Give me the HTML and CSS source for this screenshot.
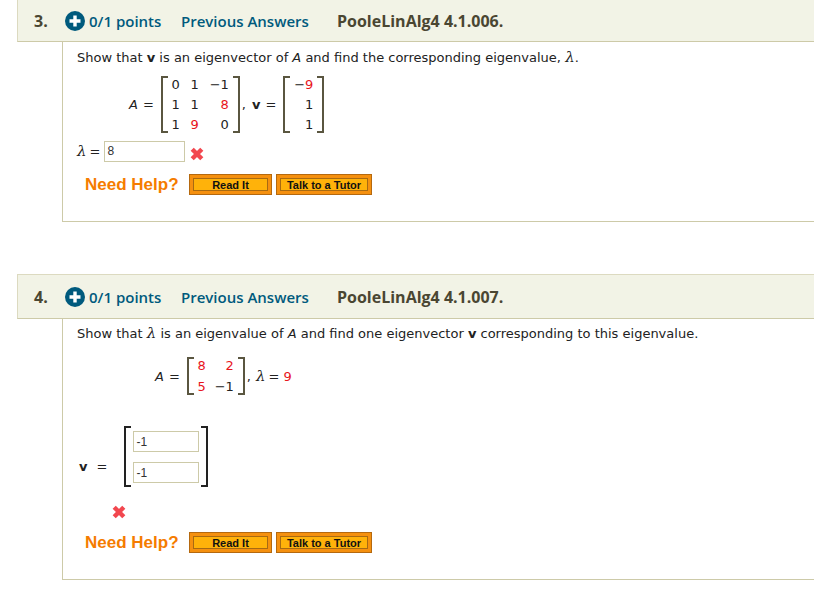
FILE: index.html
```html
<!DOCTYPE html>
<html lang="en">
  <head>
    <meta charset="UTF-8" />
    <title>Questions</title>
    <link rel="stylesheet" href="styles.css">
  </head>
  <body>
    <div class="question q3">
      <div class="q-head">
        <span class="q-num">3.</span>
        <svg class="plus" width="20" height="20" viewBox="0 0 20 20"><circle cx="10" cy="10" r="10" fill="#005a7d"/><path d="M10 4.5v11M4.5 10h11" stroke="#fff" stroke-width="3.4"/></svg>
        <span class="q-points">0/1 points</span>
        <span class="q-prev">Previous Answers</span>
        <span class="q-code">PooleLinAlg4 4.1.006.</span>
      </div>
      <div class="q-body">
        <p class="prompt">Show that <b>v</b> is an eigenvector of <i>A</i> and find the corresponding eigenvalue, <i class="lam">λ</i>.</p>
        <div class="eq eq-a">
          <i>A</i><span class="eq-sign">=</span>
          <div class="matrix m33">
            <span>0</span><span>1</span><span>−1</span>
            <span>1</span><span>1</span><span class="red">8</span>
            <span>1</span><span class="red">9</span><span>0</span>
          </div>
          <span class="comma">,</span><b>v</b><span class="eq-sign">=</span>
          <div class="matrix m31">
            <span>−<span class="red">9</span></span>
            <span>1</span>
            <span>1</span>
          </div>
        </div>
        <div class="answer">
          <i class="lam">λ</i><span class="eq-sign">=</span>
          <input class="box box-wide" type="text" value="8" />
          <svg class="cross" width="14" height="14" viewBox="0 0 14 14"><path d="M2.2 2.2l9.6 9.6M11.8 2.2l-9.6 9.6" stroke="#f2474f" stroke-width="4.4"/></svg>
        </div>
        <div class="help">
          <span class="help-label">Need Help?</span>
          <button class="help-btn read">Read It</button>
          <button class="help-btn tutor">Talk to a Tutor</button>
        </div>
      </div>
    </div>

    <div class="question q4">
      <div class="q-head">
        <span class="q-num">4.</span>
        <svg class="plus" width="20" height="20" viewBox="0 0 20 20"><circle cx="10" cy="10" r="10" fill="#005a7d"/><path d="M10 4.5v11M4.5 10h11" stroke="#fff" stroke-width="3.4"/></svg>
        <span class="q-points">0/1 points</span>
        <span class="q-prev">Previous Answers</span>
        <span class="q-code">PooleLinAlg4 4.1.007.</span>
      </div>
      <div class="q-body">
        <p class="prompt">Show that <i class="lam">λ</i> is an eigenvalue of <i>A</i> and find one eigenvector <b>v</b> corresponding to this eigenvalue.</p>
        <div class="eq eq-b">
          <i>A</i><span class="eq-sign">=</span>
          <div class="matrix m22">
            <span class="red">8</span><span class="red">2</span>
            <span class="red">5</span><span>−1</span>
          </div>
          <span class="comma">,</span><i class="lam">λ</i><span class="eq-sign">=</span><span class="red">9</span>
        </div>
        <div class="vec-answer">
          <div class="vec-label"><b>v</b><span class="eq-sign">=</span></div>
          <div class="matrix input-matrix">
            <input class="box" type="text" value="-1" />
            <input class="box" type="text" value="-1" />
          </div>
        </div>
        <svg class="cross cross-b" width="14" height="14" viewBox="0 0 14 14"><path d="M2.2 2.2l9.6 9.6M11.8 2.2l-9.6 9.6" stroke="#f2474f" stroke-width="4.4"/></svg>
        <div class="help">
          <span class="help-label">Need Help?</span>
          <button class="help-btn read">Read It</button>
          <button class="help-btn tutor">Talk to a Tutor</button>
        </div>
      </div>
    </div>
  </body>
</html>
```

FILE: styles.css
```css
* {
  margin: 0;
  padding: 0;
  box-sizing: border-box;
}

body {
  background: white;
  padding-left: 17px;
  font-family: "DejaVu Sans", sans-serif;
  font-size: 13px;
  color: #222;
  overflow: hidden;
}

.q-head {
  display: flex;
  align-items: center;
  height: 42px;
  padding-left: 16px;
  background: #f2f3e6;
  border-bottom: 1px solid #cdcaa8;
  border-left: 1px solid #dcdac0;
  font-family: "Open Sans", sans-serif;
  font-size: 15px;
  font-weight: 600;
}

.q4 {
  margin-top: 52px;
}

.q4 .q-head {
  height: 45px;
  border-top: 1px solid #dcdac0;
}

.q-num {
  width: 31px;
  font-size: 16px;
  font-weight: 700;
  color: #4a4632;
}

.q-points {
  margin-left: 4px;
  width: 92px;
  color: #005a7d;
}

.q-prev {
  width: 156px;
  color: #005a7d;
}

.q-code {
  font-size: 16px;
  font-weight: 700;
  color: #4a4632;
}

.q-body {
  margin-left: 45px;
  padding-left: 14px;
  border-left: 1px solid #cdcaa8;
  border-bottom: 1px solid #cdcaa8;
}

.q3 .q-body {
  height: 180px;
  padding-top: 7px;
}

.q4 .q-body {
  height: 261px;
  padding-top: 6px;
}

.prompt {
  line-height: 17px;
}

.lam {
  font-family: "DejaVu Serif", serif;
  font-size: 15px;
  line-height: 17px;
}

.eq {
  display: flex;
  align-items: center;
}

.eq-a {
  margin-top: 10px;
  padding-left: 52px;
}

.eq-b {
  margin-top: 15px;
  padding-left: 78px;
}

.eq-sign {
  margin: 0 7px 0 5px;
}

.lam + .eq-sign {
  margin: 0 4px 0 3px;
}

.comma {
  margin: 0 6px 0 2px;
}

.eq-b .comma {
  margin-right: 5px;
}

.red {
  color: #e8141c;
}

.matrix {
  display: grid;
  position: relative;
  border-left: 2px solid #5a5640;
  border-right: 2px solid #5a5640;
  text-align: right;
}

.matrix::before,
.matrix::after {
  content: "";
  position: absolute;
  top: 0;
  bottom: 0;
  width: 5px;
  border-top: 2px solid #5a5640;
  border-bottom: 2px solid #5a5640;
}

.matrix::before {
  left: 0;
}

.matrix::after {
  right: 0;
}

.m33 {
  grid-template-columns: 10px 19px 30px;
  grid-auto-rows: 20px;
  height: 57px;
  padding: 0 9px 0 7px;
  align-items: center;
  align-content: center;
}

.m31 {
  grid-template-columns: 21px;
  grid-auto-rows: 20px;
  height: 57px;
  padding: 0 9px 0 7px;
  align-items: center;
  align-content: center;
}

.m22 {
  grid-template-columns: 10px 28px;
  grid-auto-rows: 21px;
  height: 38px;
  padding: 0 9px 0 7px;
  align-items: center;
  align-content: center;
}

.answer {
  display: flex;
  align-items: center;
  margin-top: 7px;
  height: 22px;
}

.box {
  display: block;
  width: 66px;
  height: 21px;
  padding-left: 2px;
  border: 1px solid #cdcaa8;
  background: white;
  font-family: "Liberation Sans", sans-serif;
  font-size: 12px;
  color: #333;
}

.box-wide {
  width: 81px;
}

.cross {
  display: block;
  margin-left: 5px;
}

.answer .cross {
  margin-top: 5px;
}

.help {
  display: flex;
  align-items: center;
  margin-left: 8px;
}

.q3 .help {
  margin-top: 12px;
}

.help-label {
  width: 104px;
  font-family: "Liberation Sans", sans-serif;
  font-size: 17px;
  font-weight: 700;
  color: #f57c00;
}

.help-btn {
  height: 21px;
  margin-right: 4px;
  border: 1px solid #b5690f;
  background: #ffb20a;
  box-shadow: inset 0 0 0 3px #f5900f, inset 0 0 0 4px #a86a12;
  font-family: "Liberation Sans", sans-serif;
  font-size: 11px;
  font-weight: 700;
  color: #111;
}

.read {
  width: 83px;
}

.tutor {
  width: 96px;
}

.vec-answer {
  display: flex;
  align-items: center;
  margin-top: 31px;
  margin-left: 2px;
}

.vec-label {
  margin-top: 19px;
}

.vec-label .eq-sign {
  margin: 0 17px 0 9px;
}

.input-matrix {
  display: flex;
  flex-direction: column;
  gap: 10px;
  padding: 5px 7px 4px 7px;
  border-color: #222;
}

.input-matrix::before,
.input-matrix::after {
  border-color: #222;
}

.cross-b {
  margin: 18px 0 0 35px;
}

.q4 .help {
  margin-top: 13px;
}
```
